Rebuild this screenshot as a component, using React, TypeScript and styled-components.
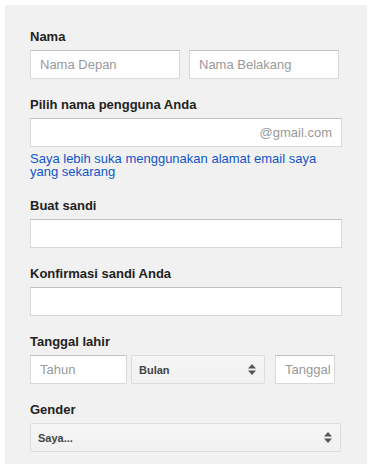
import styled, { createGlobalStyle } from "styled-components";

const GlobalStyle = createGlobalStyle`
  body {
    margin: 0;
    background: #fff;
    font-family: "Liberation Sans", Arial, sans-serif;
  }
`;

const Panel = styled.div`
  margin: 5px 0 0 5px;
  width: 362px;
  min-height: 459px;
  box-sizing: border-box;
  padding: 24px 25px 0 25px;
  background-color: #f1f1f1;
`;

const Field = styled.div`
  margin-bottom: 18px;
`;

const Label = styled.label`
  display: block;
  font-size: 13px;
  line-height: 16px;
  font-weight: bold;
  color: #222;
  margin-bottom: 5px;
`;

const Row = styled.div`
  display: flex;
  align-items: center;
`;

const TextBox = styled.input<{ w: number; ml?: number; pr?: number }>`
  box-sizing: border-box;
  width: ${({ w }) => w}px;
  height: 29px;
  margin-left: ${({ ml }) => ml || 0}px;
  padding: 0 ${({ pr }) => (pr === undefined ? 9 : pr)}px 0 9px;
  border: 1px solid #d9d9d9;
  border-top: 1px solid #c0c0c0;
  background: #fff;
  font-family: "Liberation Sans", Arial, sans-serif;
  font-size: 13px;
  color: #333;
  outline: none;
  &::placeholder {
    color: #999;
  }
`;

const SuffixBox = styled.div`
  box-sizing: border-box;
  width: 312px;
  height: 29px;
  display: flex;
  align-items: center;
  padding: 0 9px;
  border: 1px solid #d9d9d9;
  border-top: 1px solid #c0c0c0;
  background: #fff;
`;

const BareInput = styled.input`
  flex: 1;
  min-width: 0;
  border: none;
  outline: none;
  padding: 0;
  background: transparent;
  font-family: "Liberation Sans", Arial, sans-serif;
  font-size: 13px;
`;

const Suffix = styled.span`
  font-size: 13px;
  color: #999;
`;

const Hint = styled.a`
  display: block;
  margin-top: 5px;
  padding-bottom: 2px;
  font-size: 13px;
  line-height: 13px;
  color: #15c;
  text-decoration: none;
  cursor: pointer;
`;

const Select = styled.div<{ w: number; ml?: number }>`
  box-sizing: border-box;
  width: ${({ w }) => w}px;
  height: 29px;
  margin-left: ${({ ml }) => ml || 0}px;
  padding: 0 8px 0 7px;
  display: flex;
  align-items: center;
  justify-content: space-between;
  border: 1px solid #dcdcdc;
  border-radius: 2px;
  background: linear-gradient(#f5f5f5, #f1f1f1);
  font-size: 11px;
  font-weight: bold;
  color: #444;
  cursor: default;
`;

function Arrows() {
  return (
    <svg width="8" height="11" viewBox="0 0 8 11">
      <path d="M4 0 L8 4.5 L0 4.5 Z" fill="#555" />
      <path d="M0 6.5 L8 6.5 L4 11 Z" fill="#555" />
    </svg>
  );
}

export default function App() {
  return (
    <>
      <GlobalStyle />
      <Panel>
        <Field>
          <Label>Nama</Label>
          <Row>
            <TextBox w={150} placeholder="Nama Depan" />
            <TextBox w={150} ml={9} placeholder="Nama Belakang" />
          </Row>
        </Field>
        <Field>
          <Label>Pilih nama pengguna Anda</Label>
          <SuffixBox>
            <BareInput />
            <Suffix>@gmail.com</Suffix>
          </SuffixBox>
          <Hint>Saya lebih suka menggunakan alamat email saya yang sekarang</Hint>
        </Field>
        <Field>
          <Label>Buat sandi</Label>
          <TextBox w={312} type="password" />
        </Field>
        <Field>
          <Label>Konfirmasi sandi Anda</Label>
          <TextBox w={312} type="password" />
        </Field>
        <Field>
          <Label>Tanggal lahir</Label>
          <Row>
            <TextBox w={97} placeholder="Tahun" />
            <Select w={134} ml={4}>
              <span>Bulan</span>
              <Arrows />
            </Select>
            <TextBox w={60} ml={10} pr={0} placeholder="Tanggal" />
          </Row>
        </Field>
        <Field>
          <Label>Gender</Label>
          <Select w={311}>
            <span>Saya...</span>
            <Arrows />
          </Select>
        </Field>
      </Panel>
    </>
  );
}
